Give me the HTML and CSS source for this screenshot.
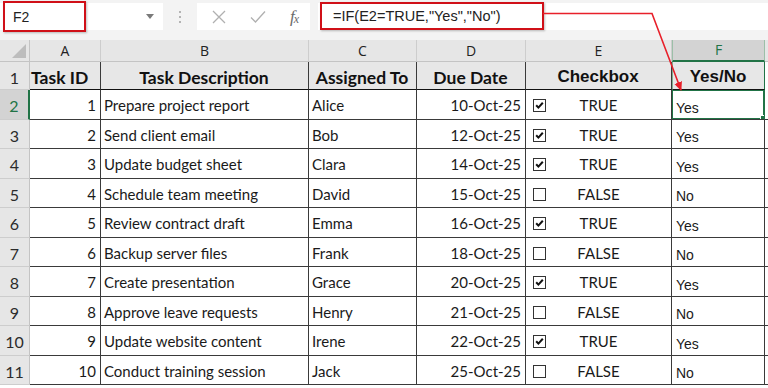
FILE: index.html
```html
<!DOCTYPE html>
<html>
<head>
<meta charset="utf-8">
<link rel="stylesheet" href="styles.css">
</head>
<body>
<div class="page">
  <div class="toolbar">
    <div class="namebox">
      <span class="name hl">F2</span>
      <svg class="caret" width="8" height="5" viewBox="0 0 8 5"><path d="M0 0h8L4 5z" fill="#7a7a7a"/></svg>
    </div>
    <div class="dots"><i></i><i></i><i></i></div>
    <div class="btns">
      <svg width="14" height="14" viewBox="0 0 14 14"><path d="M1 1L13 13M13 1L1 13" stroke="#b0b0b0" stroke-width="1.3" fill="none"/></svg>
      <svg width="16" height="14" viewBox="0 0 16 14"><path d="M1 7.5L5.5 12L15 1.5" stroke="#b0b0b0" stroke-width="1.3" fill="none"/></svg>
      <span class="fx">f<sub>x</sub></span>
    </div>
    <div class="formula">
      <span class="ftext hl">=IF(E2=TRUE,"Yes","No")</span>
    </div>
  </div>
  <table class="sheet">
    <colgroup>
      <col class="w-rh"><col class="w-a"><col class="w-b"><col class="w-c"><col class="w-d"><col class="w-e"><col class="w-f"><col class="w-g">
    </colgroup>
    <tr class="colhead">
      <th class="corner"><svg width="14" height="14" viewBox="0 0 14 14"><path d="M14 0V14H0z" fill="#bdbdbd"/></svg></th>
      <th>A</th><th>B</th><th>C</th><th>D</th><th>E</th><th class="selcol">F</th><th class="blank"></th>
    </tr>
    <tr class="r1">
      <th class="rh">1</th>
      <td class="h">Task ID</td>
      <td class="h c">Task Description</td>
      <td class="h c">Assigned To</td>
      <td class="h c">Due Date</td>
      <td class="h c arial">Checkbox</td>
      <td class="h c arial fcol">Yes/No</td>
      <td class="blank"></td>
    </tr>
    <tr>
      <th class="rh selrow">2</th>
      <td class="num">1</td><td>Prepare project report</td><td>Alice</td><td class="num">10-Oct-25</td>
      <td class="cb"><div class="cbwrap"><span class="box"><svg viewBox="0 0 11 11"><path d="M2.2 5.2L4.4 7.6L8.8 2.8" stroke="#111" stroke-width="2" fill="none"/></svg></span><span class="bool">TRUE</span></div></td>
      <td class="yn active">Yes</td><td class="blank"></td>
    </tr>
    <tr>
      <th class="rh">3</th>
      <td class="num">2</td><td>Send client email</td><td>Bob</td><td class="num">12-Oct-25</td>
      <td class="cb"><div class="cbwrap"><span class="box"><svg viewBox="0 0 11 11"><path d="M2.2 5.2L4.4 7.6L8.8 2.8" stroke="#111" stroke-width="2" fill="none"/></svg></span><span class="bool">TRUE</span></div></td>
      <td class="yn">Yes</td><td class="blank"></td>
    </tr>
    <tr>
      <th class="rh">4</th>
      <td class="num">3</td><td>Update budget sheet</td><td>Clara</td><td class="num">14-Oct-25</td>
      <td class="cb"><div class="cbwrap"><span class="box"><svg viewBox="0 0 11 11"><path d="M2.2 5.2L4.4 7.6L8.8 2.8" stroke="#111" stroke-width="2" fill="none"/></svg></span><span class="bool">TRUE</span></div></td>
      <td class="yn">Yes</td><td class="blank"></td>
    </tr>
    <tr>
      <th class="rh">5</th>
      <td class="num">4</td><td>Schedule team meeting</td><td>David</td><td class="num">15-Oct-25</td>
      <td class="cb"><div class="cbwrap"><span class="box"></span><span class="bool">FALSE</span></div></td>
      <td class="yn">No</td><td class="blank"></td>
    </tr>
    <tr>
      <th class="rh">6</th>
      <td class="num">5</td><td>Review contract draft</td><td>Emma</td><td class="num">16-Oct-25</td>
      <td class="cb"><div class="cbwrap"><span class="box"><svg viewBox="0 0 11 11"><path d="M2.2 5.2L4.4 7.6L8.8 2.8" stroke="#111" stroke-width="2" fill="none"/></svg></span><span class="bool">TRUE</span></div></td>
      <td class="yn">Yes</td><td class="blank"></td>
    </tr>
    <tr>
      <th class="rh">7</th>
      <td class="num">6</td><td>Backup server files</td><td>Frank</td><td class="num">18-Oct-25</td>
      <td class="cb"><div class="cbwrap"><span class="box"></span><span class="bool">FALSE</span></div></td>
      <td class="yn">No</td><td class="blank"></td>
    </tr>
    <tr>
      <th class="rh">8</th>
      <td class="num">7</td><td>Create presentation</td><td>Grace</td><td class="num">20-Oct-25</td>
      <td class="cb"><div class="cbwrap"><span class="box"><svg viewBox="0 0 11 11"><path d="M2.2 5.2L4.4 7.6L8.8 2.8" stroke="#111" stroke-width="2" fill="none"/></svg></span><span class="bool">TRUE</span></div></td>
      <td class="yn">Yes</td><td class="blank"></td>
    </tr>
    <tr>
      <th class="rh">9</th>
      <td class="num">8</td><td>Approve leave requests</td><td>Henry</td><td class="num">21-Oct-25</td>
      <td class="cb"><div class="cbwrap"><span class="box"></span><span class="bool">FALSE</span></div></td>
      <td class="yn">No</td><td class="blank"></td>
    </tr>
    <tr>
      <th class="rh">10</th>
      <td class="num">9</td><td>Update website content</td><td>Irene</td><td class="num">22-Oct-25</td>
      <td class="cb"><div class="cbwrap"><span class="box"><svg viewBox="0 0 11 11"><path d="M2.2 5.2L4.4 7.6L8.8 2.8" stroke="#111" stroke-width="2" fill="none"/></svg></span><span class="bool">TRUE</span></div></td>
      <td class="yn">Yes</td><td class="blank"></td>
    </tr>
    <tr>
      <th class="rh">11</th>
      <td class="num">10</td><td>Conduct training session</td><td>Jack</td><td class="num">25-Oct-25</td>
      <td class="cb"><div class="cbwrap"><span class="box"></span><span class="bool">FALSE</span></div></td>
      <td class="yn">No</td><td class="blank"></td>
    </tr>
  </table>
  <svg class="arrow" width="768" height="388" viewBox="0 0 768 388">
    <defs>
      <marker id="ah" markerWidth="10" markerHeight="10" refX="8" refY="5" orient="auto" markerUnits="userSpaceOnUse">
        <path d="M0 1L9 5L0 9z" fill="#e8202a"/>
      </marker>
    </defs>
    <polyline points="543,13.5 652,13.5 681,90" fill="none" stroke="#e8202a" stroke-width="1.6" marker-end="url(#ah)"/>
  </svg>
</div>
</body>
</html>
```
FILE: styles.css
```css
* { box-sizing: border-box; }
body { margin: 0; background: #fff; width: 768px; height: 388px; overflow: hidden; }
.page { position: relative; width: 768px; height: 388px; }

/* toolbar */
.toolbar { height: 40px; background: #f3f3f3; display: flex; align-items: flex-start; padding-top: 3px; }
.namebox { width: 163px; height: 27px; background: #fff; display: flex; align-items: center; justify-content: space-between; padding: 0 9px 0 0; }
.name { font-family: "Liberation Sans", Arial, sans-serif; font-size: 14px; color: #222; height: 31px; width: 83px; margin: 0 0 0 3px; display: flex; align-items: center; padding-left: 8px; }
.hl { border: 2px solid #d01018; box-shadow: 1px 1px 2px rgba(0,0,0,0.25); }
.dots { width: 34px; height: 27px; display: flex; flex-direction: column; align-items: center; justify-content: center; gap: 3px; }
.dots i { display: block; width: 2px; height: 2px; background: #b3b3b3; }
.btns { width: 113px; height: 27px; background: #fff; display: flex; align-items: center; justify-content: space-between; padding: 0 12px 0 15px; }
.fx { font-family: "Liberation Serif", serif; font-style: italic; font-size: 17px; color: #6b6b6b; letter-spacing: -1px; }
.fx sub { font-size: 12px; vertical-align: -1px; }
.formula { flex: 1; height: 27px; margin-left: 8px; background: #fff; display: flex; align-items: center; }
.ftext { font-family: "Liberation Sans", Arial, sans-serif; font-size: 14.5px; color: #222; height: 28px; width: 224px; margin-left: 2px; display: flex; align-items: center; padding-left: 11px; margin-top: -2px; }

/* sheet */
.sheet { border-collapse: separate; border-spacing: 0; table-layout: fixed; width: 768px; }
.w-rh { width: 30px; } .w-a { width: 71px; } .w-b { width: 208px; } .w-c { width: 108px; }
.w-d { width: 109px; } .w-e { width: 146px; } .w-f { width: 93px; } .w-g { width: 3px; }

.colhead th { height: 22px; background: #e6e6e6; font-family: "Open Sans", "Noto Sans", sans-serif; font-weight: normal; font-size: 14px; color: #222; border-right: 1px solid #cdcdcd; border-bottom: 1px solid #c4c4c4; padding: 0; text-align: center; line-height: 20px; }
.colhead th.corner { text-align: right; vertical-align: bottom; padding: 0 3px 3px 0; line-height: 0; border-right-color: #c4c4c4; }
.colhead th.selcol { background: #d3d3d3; color: #217346; border-bottom: 2px solid #217346; border-left: 1px solid #9cbfa8; border-right: 1px solid #9cbfa8; }
.colhead th.blank { border-right: none; background: #e6e6e6; }

th.rh { background: #e6e6e6; font-family: "Lato", sans-serif; font-weight: normal; font-size: 16px; color: #2b2b2b; text-align: center; border-right: 1px solid #c4c4c4; border-bottom: 1px solid #cdcdcd; padding: 3px 0 0 0; vertical-align: middle; }
th.rh.selrow { background: #d3d3d3; color: #217346; border-right: 2px solid #217346; }

tr { height: 29.5px; }
tr.colhead { height: 22px; }
tr.r1 { height: 28px; }

td { font-family: "Lato", sans-serif; font-size: 15px; color: #1a1a1a; padding: 2px 4px 0 3px; border-right: 1px solid #3a3a3a; border-bottom: 1px solid #3a3a3a; white-space: nowrap; overflow: hidden; vertical-align: middle; }
td.num { text-align: right; }
td.blank { border-right: none; }

.r1 td { background: #e7e7e7; border-bottom: 1px solid #111; padding-top: 3px; }
.r1 td.h { font-weight: bold; font-size: 17.5px; color: #111; }
.r1 td.c { text-align: center; }
.r1 td.arial { font-family: "Liberation Sans", Arial, sans-serif; font-size: 17px; }
.r1 td.fcol { border-left: 1px solid #7fae8f; border-right: 1px solid #217346; }
.r1 td.blank { background: #fff; border-bottom: none; }
.r1 td:first-of-type { padding-left: 1px; }

td.cb { padding: 2px 0 0 7px; }
.cbwrap { display: grid; align-items: center; }
.box, .bool { grid-area: 1 / 1; }
.box { justify-self: start; width: 13px; height: 13px; border: 1px solid #333; background: #fff; display: block; margin-top: 1px; }
.box svg { display: block; width: 11px; height: 11px; }
.bool { justify-self: center; margin-left: -7px; font-family: "Lato", sans-serif; font-size: 15px; color: #1a1a1a; }

td.yn { font-family: "Liberation Sans", Arial, sans-serif; font-size: 14px; vertical-align: bottom; padding: 0 3px 3px 4px; }
td.yn.active { position: relative; border-right-color: #217346; }
td.yn.active::after { content: ""; position: absolute; left: -1px; top: -1px; right: -1px; bottom: -1px; border: 2px solid #217346; }
td.yn.active::before { content: ""; position: absolute; right: -4px; bottom: -4px; width: 6px; height: 6px; background: #217346; border: 1px solid #fff; z-index: 2; }

.arrow { position: absolute; left: 0; top: 0; pointer-events: none; }
```
